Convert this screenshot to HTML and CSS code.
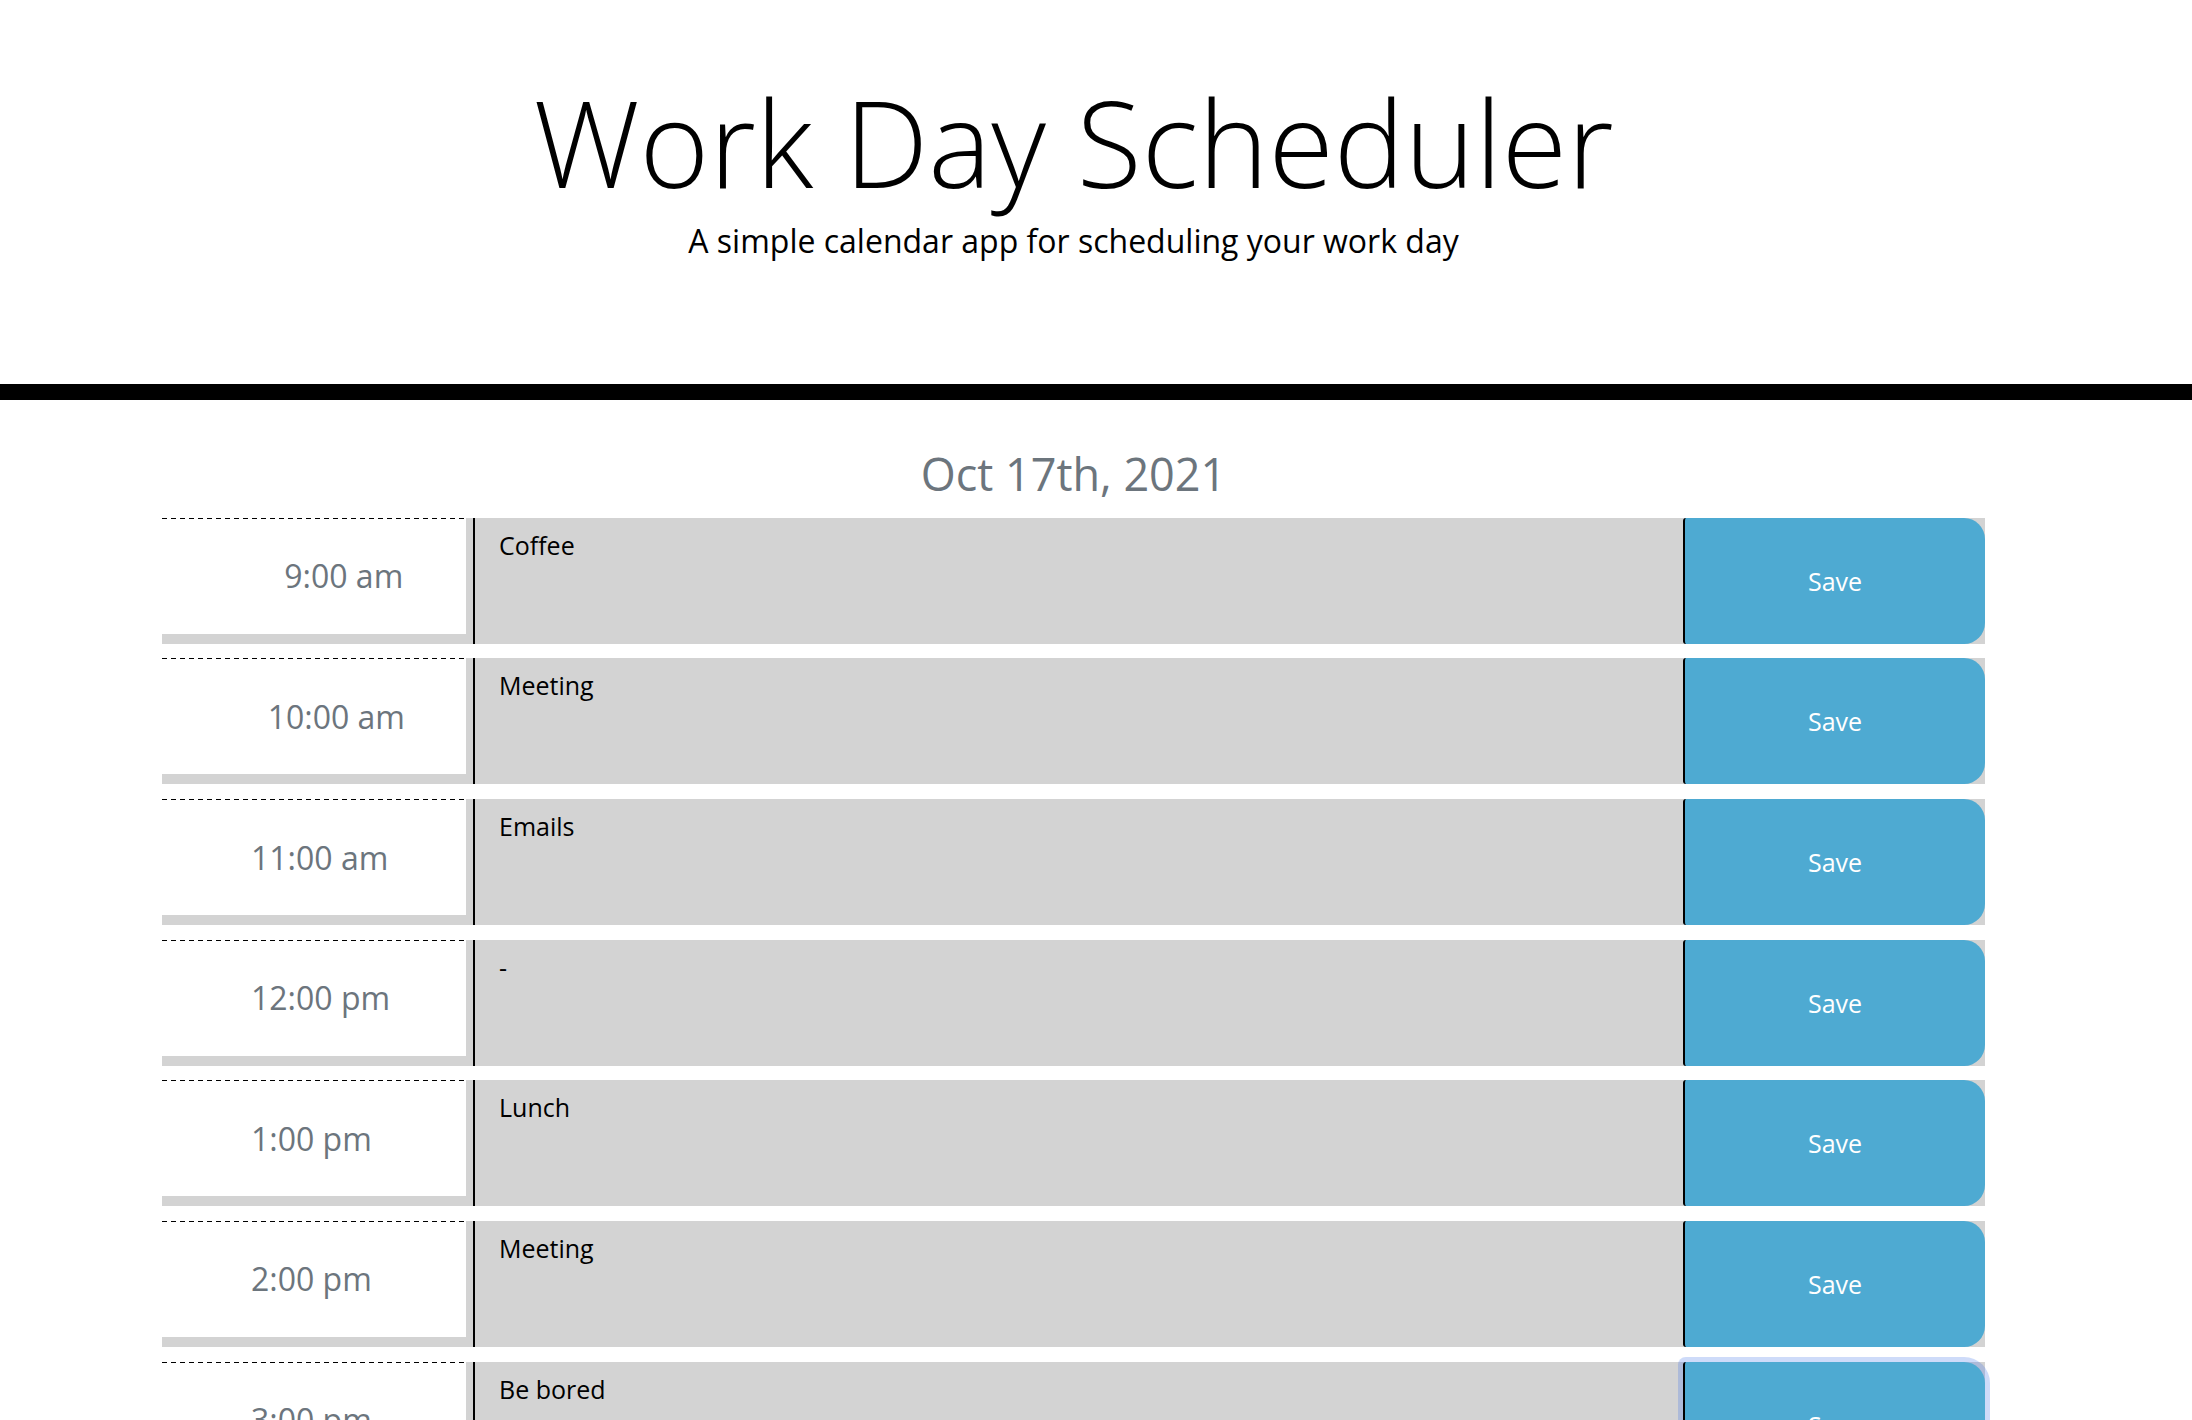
FILE: index.html
```html
<!DOCTYPE html>
<html lang="en">
<head>
    <meta charset="UTF-8">
    <title>Work Day Scheduler</title>
    <link rel="stylesheet" href="styles.css">
</head>
<body>
    <header class="jumbotron">
        <div class="container">
            <h1 class="display">Work Day Scheduler</h1>
            <p class="lead">A simple calendar app for scheduling your work day</p>
        </div>
    </header>

    <main class="container">
        <p id="currentDay" class="current-day">Oct 17th, 2021</p>

        <div class="time-block past">
            <div class="hour">    9:00 am</div>
            <textarea class="description">Coffee</textarea>
            <button class="save-btn">Save</button>
        </div>
        <div class="time-block past">
            <div class="hour">  10:00 am</div>
            <textarea class="description">Meeting</textarea>
            <button class="save-btn">Save</button>
        </div>
        <div class="time-block past">
            <div class="hour">11:00 am</div>
            <textarea class="description">Emails</textarea>
            <button class="save-btn">Save</button>
        </div>
        <div class="time-block past">
            <div class="hour">12:00 pm</div>
            <textarea class="description">-</textarea>
            <button class="save-btn">Save</button>
        </div>
        <div class="time-block past">
            <div class="hour">1:00 pm</div>
            <textarea class="description">Lunch</textarea>
            <button class="save-btn">Save</button>
        </div>
        <div class="time-block past">
            <div class="hour">2:00 pm</div>
            <textarea class="description">Meeting</textarea>
            <button class="save-btn">Save</button>
        </div>
        <div class="time-block past">
            <div class="hour">3:00 pm</div>
            <textarea class="description">Be bored</textarea>
            <button class="save-btn is-focused">Save</button>
        </div>
        <div class="time-block past">
            <div class="hour">4:00 pm</div>
            <textarea class="description"></textarea>
            <button class="save-btn">Save</button>
        </div>
        <div class="time-block past">
            <div class="hour">5:00 pm</div>
            <textarea class="description"></textarea>
            <button class="save-btn">Save</button>
        </div>
    </main>
</body>
</html>
```

FILE: styles.css
```css
* {
    box-sizing: border-box;
}

body {
    font-family: 'Open Sans', sans-serif;
    font-size: 25px;
    line-height: 1.5;
    color: #000;
    background: #fff;
    margin: 0;
}

.container {
    width: 1823px;
    margin-left: 162px;
}

.jumbotron {
    text-align: center;
    padding: 71.4px 0 118.5px;
    border-bottom: 16px solid #000;
}

.display {
    font-size: 119px;
    font-weight: 300;
    line-height: 1.2;
    margin: 0;
}

.lead {
    font-size: 32px;
    margin: 3px 0 0;
}

.current-day {
    text-align: center;
    color: #6c757d;
    font-size: 45px;
    line-height: 1.2;
    margin: 47px 0 17px;
}

.time-block {
    display: grid;
    grid-template-columns: 311px 1fr 302px;
    height: 126px;
    margin-bottom: 14.67px;
}

.past {
    background: #d3d3d3;
}

.present {
    background: #ff6961;
}

.future {
    background: #77dd77;
}

/* dashed top edge drawn as a gradient so the dashes keep their length */
.hour {
    display: flex;
    align-items: center;
    white-space: pre;
    background: linear-gradient(to right, #000 5px, transparent 5px) top left / 9px 1px repeat-x, #fff;
    color: #6c757d;
    font-size: 32px;
    padding: 1px 0 0 89px;
    margin: 0 7px 10px 0;
}

.description {
    font-family: 'Open Sans', sans-serif;
    font-size: 25px;
    line-height: 1.5;
    color: #000;
    background: transparent;
    border: none;
    border-left: 2px solid #000;
    padding: 9px 24px;
    resize: none;
    outline: none;
}

.save-btn {
    font-family: 'Open Sans', sans-serif;
    font-size: 25px;
    color: #fff;
    background: #4eaad2;
    border: none;
    border-left: 2px solid #000;
    border-radius: 3px 21px 21px 3px;
    cursor: pointer;
}

.save-btn.is-focused {
    box-shadow: 0 0 0 5px rgba(60, 110, 230, 0.25);
}
```
